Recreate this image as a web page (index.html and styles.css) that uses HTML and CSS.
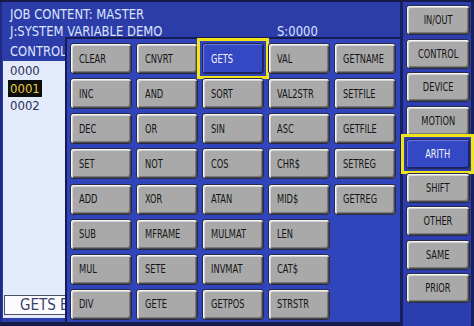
FILE: index.html
```html
<!DOCTYPE html>
<html>
<head>
<meta charset="utf-8">
<link rel="stylesheet" href="styles.css">
</head>
<body>
<div class="screen">
  <div class="main">
    <div class="hline l1"><span class="ht">JOB CONTENT: MASTER</span></div>
    <div class="hline l2"><span class="jobname"><span class="ht">J:SYSTEM VARIABLE DEMO</span></span><span class="ht">S:0000</span></div>
    <div class="hline l3"><span class="ht">CONTROL</span></div>
    <div class="list">
      <div class="item">0000</div>
      <div class="item"><span class="cur">0001</span></div>
      <div class="item">0002</div>
      <div class="input">GETS B</div>
    </div>
    <div class="popup">
      <div class="grid">
        <div class="btn"><span class="t">CLEAR</span></div><div class="btn"><span class="t">CNVRT</span></div><div class="btn sel"><span class="t">GETS</span></div><div class="btn"><span class="t">VAL</span></div><div class="btn"><span class="t">GETNAME</span></div>
        <div class="btn"><span class="t">INC</span></div><div class="btn"><span class="t">AND</span></div><div class="btn"><span class="t">SORT</span></div><div class="btn"><span class="t">VAL2STR</span></div><div class="btn"><span class="t">SETFILE</span></div>
        <div class="btn"><span class="t">DEC</span></div><div class="btn"><span class="t">OR</span></div><div class="btn"><span class="t">SIN</span></div><div class="btn"><span class="t">ASC</span></div><div class="btn"><span class="t">GETFILE</span></div>
        <div class="btn"><span class="t">SET</span></div><div class="btn"><span class="t">NOT</span></div><div class="btn"><span class="t">COS</span></div><div class="btn"><span class="t">CHR$</span></div><div class="btn"><span class="t">SETREG</span></div>
        <div class="btn"><span class="t">ADD</span></div><div class="btn"><span class="t">XOR</span></div><div class="btn"><span class="t">ATAN</span></div><div class="btn"><span class="t">MID$</span></div><div class="btn"><span class="t">GETREG</span></div>
        <div class="btn"><span class="t">SUB</span></div><div class="btn"><span class="t">MFRAME</span></div><div class="btn"><span class="t">MULMAT</span></div><div class="btn"><span class="t">LEN</span></div><div class="empty"></div>
        <div class="btn"><span class="t">MUL</span></div><div class="btn"><span class="t">SETE</span></div><div class="btn"><span class="t">INVMAT</span></div><div class="btn"><span class="t">CAT$</span></div><div class="empty"></div>
        <div class="btn"><span class="t">DIV</span></div><div class="btn"><span class="t">GETE</span></div><div class="btn"><span class="t">GETPOS</span></div><div class="btn"><span class="t">STRSTR</span></div><div class="empty"></div>
      </div>
    </div>
  </div>
  <div class="side">
    <div class="btn sbtn"><span class="t">IN/OUT</span></div>
    <div class="btn sbtn"><span class="t">CONTROL</span></div>
    <div class="btn sbtn"><span class="t">DEVICE</span></div>
    <div class="btn sbtn"><span class="t">MOTION</span></div>
    <div class="btn sbtn sel"><span class="t">ARITH</span></div>
    <div class="btn sbtn"><span class="t">SHIFT</span></div>
    <div class="btn sbtn"><span class="t">OTHER</span></div>
    <div class="btn sbtn"><span class="t">SAME</span></div>
    <div class="btn sbtn"><span class="t">PRIOR</span></div>
  </div>
</div>
</body>
</html>
```
FILE: styles.css
```css
html, body {
  margin: 0;
  padding: 0;
}
body {
  width: 474px;
  height: 326px;
  overflow: hidden;
  background: #161b4a;
  font-family: "DejaVu Sans Condensed", "DejaVu Sans", sans-serif;
}
.screen {
  display: flex;
  padding-top: 2px;
  height: 324px;
  box-sizing: border-box;
}
.main {
  position: relative;
  width: 400px;
  height: 320px;
  background: #2c3da9;
  border-left: 2px solid #1f2a82;
  box-sizing: border-box;
  display: flex;
  flex-direction: column;
}
.hline {
  color: #dde4ff;
  font-size: 14px;
  line-height: 17px;
  padding-left: 8px;
  white-space: nowrap;
}
.ht {
  display: inline-block;
  transform: scaleX(0.92);
  transform-origin: left center;
}
.l1 { margin-top: 4px; }
.l2 { display: flex; }
.l3 { margin-top: 3px; }
.jobname {
  display: inline-block;
  width: 267px;
}
.list {
  margin: 1px 0 4px 1px;
  flex: 1;
  background: #e3ebfb;
  display: flex;
  flex-direction: column;
  padding: 1px 0 3px 0;
}
.item {
  font-size: 13px;
  line-height: 17.5px;
  color: #2a2f5a;
  padding-left: 7px;
}
.cur {
  background: #0c0c0c;
  color: #e8cc3c;
  padding: 1px 2px;
  margin-left: -2px;
}
.input {
  margin-top: auto;
  margin-left: 1px;
  height: 20px;
  box-sizing: border-box;
  background: #fbfcff;
  border: 1px solid #4d4f68;
  color: #3c3f6a;
  font-size: 15px;
  line-height: 18px;
  padding-left: 15px;
}
.popup {
  position: absolute;
  left: 63px;
  top: 35px;
  right: 0;
  bottom: 0;
  background: #3045bb;
  border-left: 2px solid #161c52;
  border-top: 2px solid #161c52;
  padding: 4px 0 0 3px;
}
.grid {
  display: grid;
  grid-template-columns: repeat(5, 62px);
  grid-auto-rows: 31px;
  column-gap: 4px;
  row-gap: 4.15px;
}
.btn {
  position: relative;
  box-sizing: border-box;
  background: #a9a9a9;
  border: 1px solid #262a4a;
  border-radius: 3px;
  box-shadow: inset 1px 1px 0 #f6f6f6, inset 2px 2px 0 #d4d4d4, inset -1px -1px 0 #4a4a4a, inset -2px -2px 0 #7a7a7a;
  color: #141414;
  font-size: 11.5px;
  display: flex;
  align-items: center;
  padding-left: 8px;
  white-space: nowrap;
}
.t {
  display: inline-block;
  transform: scaleX(0.8);
  transform-origin: left center;
}
.btn.sel {
  background: #3448c4;
  color: #f4f6ff;
  box-shadow: inset 1px 1px 0 #6a78e4, inset -1px -1px 0 #18206a;
}
.btn.sel::after {
  content: "";
  position: absolute;
  left: -6px;
  top: -6px;
  right: -6px;
  bottom: -6px;
  border: 3px solid #f2e41a;
}
.side {
  width: 74px;
  height: 324px;
  box-sizing: border-box;
  background: #2c3db0;
  border-left: 3px solid #19205e;
  border-right: 3px solid #19205e;
  padding: 3px 0 0 3px;
  display: flex;
  flex-direction: column;
  gap: 3.5px;
}
.sbtn {
  width: 64px;
  height: 30px;
  flex: none;
  justify-content: center;
  padding-left: 0;
}
.sbtn .t {
  transform-origin: center center;
}
.sbtn.sel::after {
  right: -5px;
}
```
